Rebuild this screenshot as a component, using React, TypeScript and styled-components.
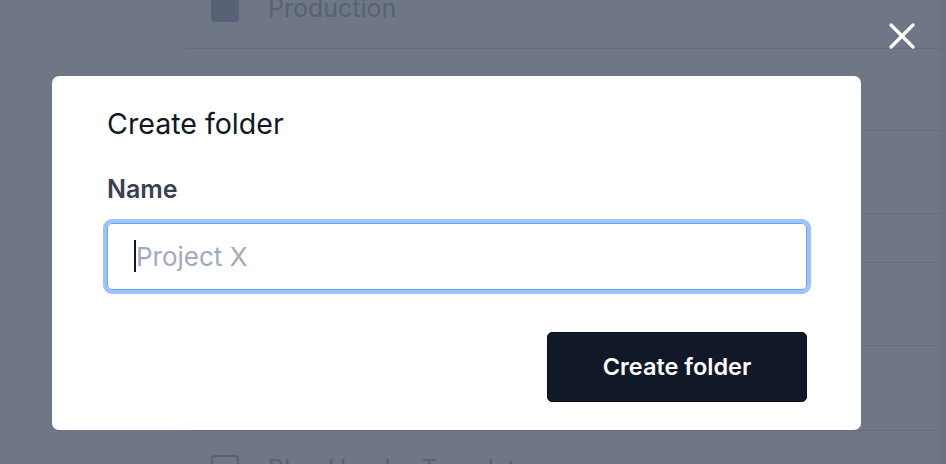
import React from 'react'
import styled, { createGlobalStyle } from 'styled-components'

const GlobalStyle = createGlobalStyle`
    html, body {
        margin : 0;
        padding : 0;
        height : 100%;
        overflow : hidden;
        background-color : #6a7281;
        font-family : Inter, "Noto Sans", sans-serif;
    }
    #root {
        height : 100%;
    }
`

const Page = styled.div`
    position : relative;
    display : flex;
    height : 464px;
    overflow : hidden;
`

const Sidebar = styled.div`
    width : 187px;
    flex-shrink : 0;
    background-color : #6f7786;
`

const List = styled.div`
    flex : 1;
    margin-top : -34px;
    background-color : #6f7786;
`

const Gutter = styled.div`
    width : 6px;
    flex-shrink : 0;
    background-color : #6a7281;
`

const Row = styled.div<{ $height: number }>`
    box-sizing : border-box;
    display : flex;
    align-items : center;
    gap : 29px;
    height : ${p => p.$height}px;
    padding-left : 24px;
    padding-top : 2px;
    border-bottom : 1px solid #666e7d;
`

const Check = styled.span<{ $checked?: boolean }>`
    box-sizing : border-box;
    width : 28px;
    height : 28px;
    border-radius : 4px;
    background-color : ${p => (p.$checked ? '#586277' : 'transparent')};
    border : 2px solid #586277;
`

const RowLabel = styled.span`
    font-size : 25px;
    color : #586175;
`

const Modal = styled.div`
    position : absolute;
    top : 76px;
    left : 52px;
    width : 809px;
    box-sizing : border-box;
    padding : 31px 54px 28px 55px;
    background-color : #ffffff;
    border-radius : 7px;
    display : flex;
    flex-direction : column;
`

const Title = styled.h2`
    margin : 0;
    font-size : 28.6px;
    font-weight : 400;
    color : #111827;
    line-height : 1.21;
`

const Label = styled.label`
    margin-top : 32px;
    font-size : 25px;
    font-weight : 600;
    color : #374151;
    line-height : 1.21;
`

const InputBox = styled.div`
    box-sizing : border-box;
    margin-top : 19px;
    height : 67px;
    display : flex;
    align-items : center;
    padding-left : 26px;
    border : 1px solid #6fa3f4;
    border-radius : 5px;
    box-shadow : 0 0 0 4px #9cc3fb;
`

const Caret = styled.span`
    width : 2px;
    height : 32px;
    background-color : #111827;
`

const Placeholder = styled.span`
    font-size : 26px;
    color : #a0aabd;
    line-height : 1.21;
`

const Footer = styled.div`
    display : flex;
    justify-content : flex-end;
    margin-top : 42px;
`

const PrimaryButton = styled.button`
    width : 260px;
    height : 70px;
    border : 1px solid #0b0f19;
    border-radius : 5px;
    background-color : #111827;
    color : #ffffff;
    font-family : Inter, "Noto Sans", sans-serif;
    font-size : 23.5px;
    font-weight : 600;
    cursor : pointer;
`

const CloseButton = styled.button`
    position : absolute;
    top : 22px;
    left : 888px;
    width : 28px;
    height : 28px;
    padding : 0;
    border : 0;
    background : transparent;
    cursor : pointer;
`

const rows = [
    { h: 83, label: 'Production', checked: true },
    { h: 82, label: 'Staging' },
    { h: 83, label: 'Development' },
    { h: 49, label: '' },
    { h: 83, label: 'Marketing' },
    { h: 85, label: 'Design' },
    { h: 74, label: 'Blog Header Template' },
]

export default function App() {
    return (
        <>
            <GlobalStyle />
            <Page>
                <Sidebar />
                <List>
                    {rows.map((r, i) => (
                        <Row key={i} $height={r.h}>
                            {r.label && <Check $checked={r.checked} />}
                            {r.label && <RowLabel>{r.label}</RowLabel>}
                        </Row>
                    ))}
                </List>
                <Gutter />

                <CloseButton aria-label="Close">
                    <svg width="28" height="28" viewBox="0 0 28 28" fill="none" stroke="#ffffff" strokeWidth="3.2" strokeLinecap="round">
                        <path d="M3 3l22 22M25 3L3 25" />
                    </svg>
                </CloseButton>

                <Modal>
                    <Title>Create folder</Title>
                    <Label>Name</Label>
                    <InputBox>
                        <Caret />
                        <Placeholder>Project X</Placeholder>
                    </InputBox>
                    <Footer>
                        <PrimaryButton>Create folder</PrimaryButton>
                    </Footer>
                </Modal>
            </Page>
        </>
    )
}
